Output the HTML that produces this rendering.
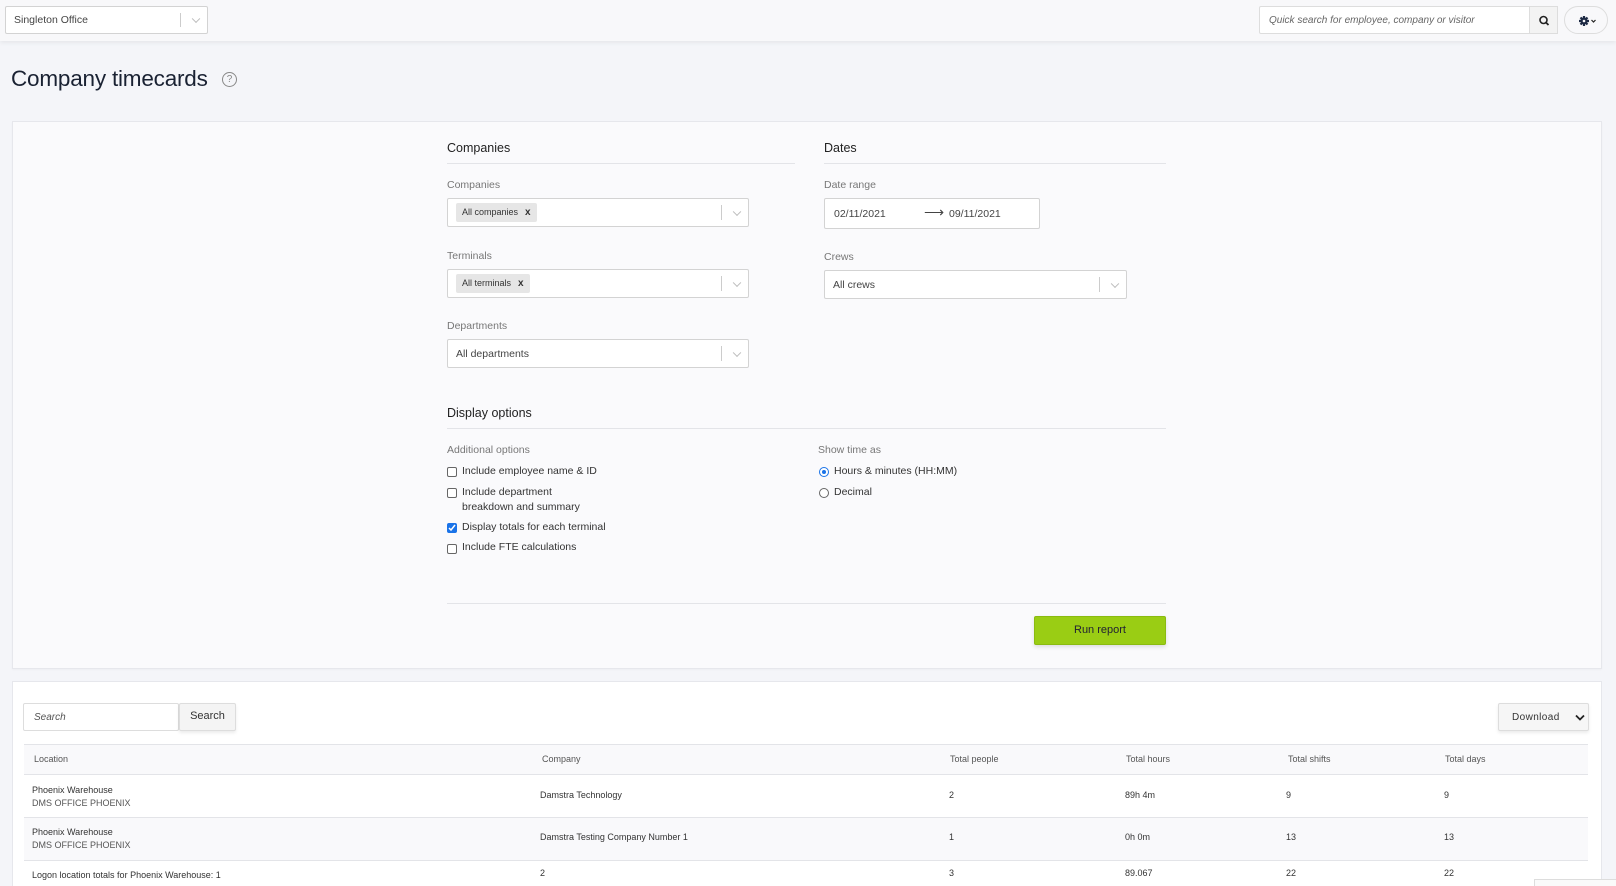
<!DOCTYPE html>
<html><head><meta charset="utf-8"><style>
*{box-sizing:border-box;margin:0;padding:0}
html{width:1616px;height:886px;overflow:hidden}
body{width:1616px;height:886px;overflow:hidden;background:#f4f5f9;font-family:"Liberation Sans",sans-serif;color:#333;position:relative;font-size:11px}
.a{position:absolute}
.top{left:0;top:0;width:1616px;height:41px;background:#f8f8fa;box-shadow:0 2px 4px rgba(0,0,0,.06)}
.sel{position:absolute;background:#fff;border:1px solid #d3d3d3;border-radius:2px;font-size:10.5px;color:#444}
.sel .t{position:absolute;left:8px;top:50%;transform:translateY(-50%)}
.sel .d{position:absolute;right:26px;top:6px;bottom:6px;width:1px;background:#ccc}
.sel .c{position:absolute;right:8px;top:50%;width:6px;height:6px;border-right:1px solid #bbb;border-bottom:1px solid #bbb;transform:translateY(-70%) rotate(45deg)}
.tag{position:absolute;left:8px;top:4px;height:19px;background:#e6e6e6;border-radius:2px;padding:0 6px;line-height:19px;font-size:9px;color:#333}
.tag b{margin-left:7px;font-weight:bold;font-size:10px}
.panel{background:#fafafc;border:1px solid #e6e7ec;box-shadow:0 1px 2px rgba(0,0,0,.03)}
.h{font-size:12.5px;color:#222}
.lbl{font-size:10.5px;color:#777}
.line{height:1px;background:#e3e4e8}
.cb{position:absolute;width:10px;height:10px;border:1px solid #666;border-radius:2px;background:#fff}
.rd{position:absolute;width:10px;height:10px;border:1px solid #666;border-radius:50%;background:#fff}
.opt{font-size:10.5px;color:#333}
.row{position:absolute;left:24px;width:1564px;border-bottom:1px solid #e3e4e8}
.cell{position:absolute;font-size:9px;color:#333}
</style></head><body>
<div class="a top"></div>
<div class="sel" style="left:5px;top:6px;width:203px;height:28px"><span class="t">Singleton Office</span><span class="d"></span><span class="c"></span></div>
<div class="a" style="left:1259px;top:6px;width:271px;height:28px;background:#fff;border:1px solid #ddd;border-radius:2px 0 0 2px"><span class="a" style="left:9px;top:8px;font-size:10px;font-style:italic;color:#666">Quick search for employee, company or visitor</span></div>
<div class="a" style="left:1529px;top:6px;width:29px;height:28px;background:#f3f3f3;border:1px solid #ddd">
<svg width="29" height="28" viewBox="0 0 29 28"><circle cx="13.5" cy="13" r="3.5" fill="none" stroke="#222" stroke-width="1.6"/><path d="M16 15.5l2.5 2.5" stroke="#222" stroke-width="1.8"/></svg></div>
<div class="a" style="left:1564px;top:6px;width:44px;height:28px;background:#f8f8fa;border:1px solid #ddd;border-radius:14px">
<svg width="44" height="28" viewBox="0 0 44 28"><g transform="translate(19,14)" fill="#1d2a44"><circle r="3.6"/><g stroke="#1d2a44" stroke-width="2.2"><path d="M0-5V5M-5 0H5M-3.5-3.5L3.5 3.5M-3.5 3.5L3.5-3.5"/></g><circle r="1.3" fill="#f8f8fa"/></g><path d="M26.5 13l2 2 2-2" fill="none" stroke="#222" stroke-width="1.2"/></svg></div>

<div class="a" style="left:11px;top:66px;font-size:22.5px;color:#1a2233;letter-spacing:-0.2px">Company timecards</div>
<div class="a" style="left:222px;top:72px;width:15px;height:15px;border:1.3px solid #888;border-radius:50%;font-size:10px;color:#888;text-align:center;line-height:13px">?</div>

<div class="a panel" style="left:12px;top:121px;width:1590px;height:548px"></div>
<div class="a h" style="left:447px;top:141px">Companies</div>
<div class="a line" style="left:447px;top:163px;width:348px"></div>
<div class="a h" style="left:824px;top:141px">Dates</div>
<div class="a line" style="left:824px;top:163px;width:342px"></div>

<div class="a lbl" style="left:447px;top:179px">Companies</div>
<div class="sel" style="left:447px;top:198px;width:302px;height:29px"><span class="tag">All companies<b>x</b></span><span class="d"></span><span class="c"></span></div>
<div class="a lbl" style="left:447px;top:250px">Terminals</div>
<div class="sel" style="left:447px;top:269px;width:302px;height:29px"><span class="tag">All terminals<b>x</b></span><span class="d"></span><span class="c"></span></div>
<div class="a lbl" style="left:447px;top:320px">Departments</div>
<div class="sel" style="left:447px;top:339px;width:302px;height:29px"><span class="t">All departments</span><span class="d"></span><span class="c"></span></div>

<div class="a lbl" style="left:824px;top:179px">Date range</div>
<div class="a" style="left:824px;top:198px;width:216px;height:31px;background:#fff;border:1px solid #d3d3d3;border-radius:2px;font-size:10.5px;color:#444">
<span class="a" style="left:9px;top:9px">02/11/2021</span><span class="a" style="left:99px;top:5px;font-size:14px">⟶</span><span class="a" style="left:124px;top:9px">09/11/2021</span></div>
<div class="a lbl" style="left:824px;top:251px">Crews</div>
<div class="sel" style="left:824px;top:270px;width:303px;height:29px"><span class="t">All crews</span><span class="d"></span><span class="c"></span></div>

<div class="a h" style="left:447px;top:406px">Display options</div>
<div class="a line" style="left:447px;top:428px;width:719px"></div>
<div class="a lbl" style="left:447px;top:444px">Additional options</div>
<div class="cb" style="left:447px;top:467px"></div><div class="a opt" style="left:462px;top:465px">Include employee name &amp; ID</div>
<div class="cb" style="left:447px;top:488px"></div><div class="a opt" style="left:462px;top:485px;line-height:15px">Include department<br>breakdown and summary</div>
<div class="cb" style="left:447px;top:523px;background:#1a73e8;border-color:#1a73e8"><svg width="8" height="8" viewBox="0 0 8 8" style="position:absolute;left:0;top:0"><path d="M1 4l2 2 4-5" fill="none" stroke="#fff" stroke-width="1.5"/></svg></div><div class="a opt" style="left:462px;top:521px">Display totals for each terminal</div>
<div class="cb" style="left:447px;top:544px"></div><div class="a opt" style="left:462px;top:541px">Include FTE calculations</div>

<div class="a lbl" style="left:818px;top:444px">Show time as</div>
<div class="rd" style="left:819px;top:467px;border-color:#1a73e8"><span class="a" style="left:2px;top:2px;width:4px;height:4px;border-radius:50%;background:#1a73e8"></span></div><div class="a opt" style="left:834px;top:465px">Hours &amp; minutes (HH:MM)</div>
<div class="rd" style="left:819px;top:488px"></div><div class="a opt" style="left:834px;top:486px">Decimal</div>

<div class="a line" style="left:447px;top:603px;width:719px"></div>
<div class="a" style="left:1034px;top:616px;width:132px;height:29px;background:#9acd14;border:1px solid #8abb10;border-radius:2px;box-shadow:0 2px 4px rgba(0,0,0,.12);text-align:center;line-height:27px;font-size:11px;color:#223">Run report</div>

<div class="a" style="left:12px;top:681px;width:1590px;height:205px;background:#fff;border:1px solid #e6e7ec;border-bottom:none"></div>
<div class="a" style="left:23px;top:703px;width:156px;height:28px;background:#fff;border:1px solid #ddd;border-radius:2px"><span class="a" style="left:10px;top:8px;font-size:10px;font-style:italic;color:#555">Search</span></div>
<div class="a" style="left:179px;top:703px;width:57px;height:28px;background:#f4f4f4;border:1px solid #ddd;border-radius:2px;box-shadow:0 2px 3px rgba(0,0,0,.08);font-size:11px;text-align:center;line-height:24px;color:#333">Search</div>
<div class="a" style="left:1498px;top:703px;width:91px;height:28px;background:#f6f6f6;border:1px solid #ddd;border-radius:2px;box-shadow:0 2px 3px rgba(0,0,0,.08);font-size:10px;color:#333"><span class="a" style="left:13px;top:8px;letter-spacing:.4px">Download</span><svg class="a" style="left:76px;top:10px" width="10" height="8" viewBox="0 0 10 8"><path d="M1 1.5l4 4 4-4" fill="none" stroke="#222" stroke-width="1.8"/></svg></div>

<div class="a" style="left:24px;top:744px;width:1564px;height:142px;border:1px solid #e3e4e8;border-bottom:none"></div>
<div class="row" style="top:744px;height:31px;background:#f9f9fb;border-top:1px solid #e3e4e8"></div>
<div class="row" style="top:775px;height:43px;background:#fff"></div>
<div class="row" style="top:818px;height:43px;background:#f9f9fb"></div>
<div class="row" style="top:861px;height:25px;background:#fff;border-bottom:none"></div>

<div class="cell" style="left:34px;top:754px;color:#555">Location</div>
<div class="cell" style="left:542px;top:754px;color:#555">Company</div>
<div class="cell" style="left:950px;top:754px;color:#555">Total people</div>
<div class="cell" style="left:1126px;top:754px;color:#555">Total hours</div>
<div class="cell" style="left:1288px;top:754px;color:#555">Total shifts</div>
<div class="cell" style="left:1445px;top:754px;color:#555">Total days</div>

<div class="cell" style="left:32px;top:784px;line-height:13px">Phoenix Warehouse<br><span style="color:#555">DMS OFFICE PHOENIX</span></div>
<div class="cell" style="left:540px;top:790px">Damstra Technology</div>
<div class="cell" style="left:949px;top:790px">2</div>
<div class="cell" style="left:1125px;top:790px">89h 4m</div>
<div class="cell" style="left:1286px;top:790px">9</div>
<div class="cell" style="left:1444px;top:790px">9</div>

<div class="cell" style="left:32px;top:826px;line-height:13px">Phoenix Warehouse<br><span style="color:#555">DMS OFFICE PHOENIX</span></div>
<div class="cell" style="left:540px;top:832px">Damstra Testing Company Number 1</div>
<div class="cell" style="left:949px;top:832px">1</div>
<div class="cell" style="left:1125px;top:832px">0h 0m</div>
<div class="cell" style="left:1286px;top:832px">13</div>
<div class="cell" style="left:1444px;top:832px">13</div>

<div class="cell" style="left:32px;top:870px">Logon location totals for Phoenix Warehouse: 1</div>
<div class="cell" style="left:540px;top:868px">2</div>
<div class="cell" style="left:949px;top:868px">3</div>
<div class="cell" style="left:1125px;top:868px">89.067</div>
<div class="cell" style="left:1286px;top:868px">22</div>
<div class="cell" style="left:1444px;top:868px">22</div>
<div class="a" style="left:1534px;top:879px;width:82px;height:7px;background:#fafafa;border:1px solid #ddd;border-bottom:none;border-right:none"></div>
</body></html>
